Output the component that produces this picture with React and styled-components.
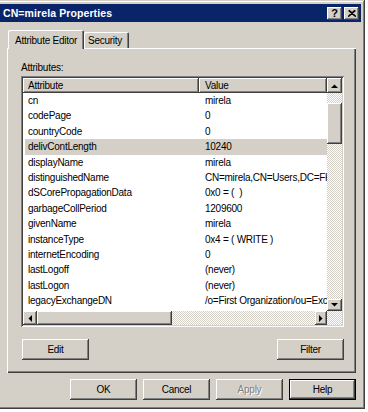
import React from 'react';
import styled, { createGlobalStyle, css } from 'styled-components';

const face = '#d4d0c8';

const GlobalStyle = createGlobalStyle`
  html, body {
    margin: 0;
    padding: 0;
    background: #fff;
  }
  body {
    font-family: "Liberation Sans", Arial, sans-serif;
    font-size: 10px;
    letter-spacing: -0.25px;
    color: #000;
    overflow: hidden;
  }
`;

const raised = css`
  box-shadow: inset -1px -1px #404040, inset 1px 1px #fff,
    inset -2px -2px #808080, inset 2px 2px ${face};
`;

const checker = css`
  background-color: #fff;
  background-image: conic-gradient(${face} 25%, #fff 0 50%, ${face} 0 75%, #fff 0);
  background-size: 2px 2px;
`;

const Window = styled.div`
  margin-left: -4px;
  width: 369px;
  height: 409px;
  box-sizing: border-box;
  padding: 4px;
  background: ${face};
  box-shadow: inset -1px -1px #404040, inset 1px 1px ${face},
    inset -2px -2px #808080, inset 2px 2px #fff;
  display: flex;
  flex-direction: column;
`;

const TitleBar = styled.div`
  height: 18px;
  background: #0a246a;
  color: #fff;
  display: flex;
  align-items: center;
  padding: 0 2px 0 3px;
`;

const TitleText = styled.div`
  flex: 1;
  font-weight: bold;
  font-size: 10.5px;
  letter-spacing: 0.1px;
`;

const CaptionButton = styled.div`
  width: 15px;
  height: 13px;
  margin-left: ${(p) => p.$gap}px;
  background: ${face};
  ${raised};
  display: flex;
  align-items: center;
  justify-content: center;
  color: #000;
  font-weight: bold;
  font-size: 11px;
  line-height: 13px;
`;

const TabStrip = styled.div`
  margin: 8px 0 0 8px;
  height: 18px;
  display: flex;
  align-items: flex-end;
`;

const Tab = styled.div`
  position: relative;
  z-index: ${(p) => (p.$active ? 1 : 0)};
  width: ${(p) => p.$width}px;
  height: ${(p) => (p.$active ? 19 : 16)}px;
  margin-bottom: ${(p) => (p.$active ? -1 : 0)}px;
  box-sizing: border-box;
  padding-left: ${(p) => p.$pad}px;
  background: ${face};
  border-radius: 2px 2px 0 0;
  box-shadow: inset 1px 1px #fff, inset -1px 0 #404040, inset -2px 0 #808080;
  line-height: ${(p) => (p.$active ? 21 : 18)}px;
  white-space: nowrap;
`;

const Panel = styled.div`
  margin: 0 5px 0 7px;
  height: 325px;
  box-sizing: border-box;
  padding: 13px 0 0 14px;
  background: ${face};
  box-shadow: inset 1px 1px #fff, inset -1px -1px #404040, inset -2px -2px #808080;
  display: flex;
  flex-direction: column;
`;

const Label = styled.div`
  line-height: 13px;
`;

const ListBox = styled.div`
  margin-top: 2px;
  width: 323px;
  height: 251px;
  box-sizing: border-box;
  padding: 2px;
  background: #fff;
  box-shadow: inset 1px 1px #808080, inset -1px -1px #fff,
    inset 2px 2px #404040, inset -2px -2px ${face};
  display: grid;
  grid-template-columns: 304px 15px;
  grid-template-rows: 233px 14px;
`;

const ListContent = styled.div`
  overflow: hidden;
  display: flex;
  flex-direction: column;
`;

const HeaderRow = styled.div`
  display: grid;
  grid-template-columns: 176px 1fr;
  height: 15px;
  flex-shrink: 0;
`;

const HeaderCell = styled.div`
  background: ${face};
  ${raised};
  padding-left: ${(p) => p.$pad}px;
  line-height: 15px;
`;

const Rows = styled.div`
  flex: 1;
  overflow: hidden;
`;

const Row = styled.div`
  display: grid;
  grid-template-columns: 174px 1fr;
  margin-left: 2px;
  height: 15.4px;
  line-height: 15.4px;
  background: ${(p) => (p.$selected ? face : 'transparent')};
  white-space: pre;
`;

const Cell = styled.div`
  padding-left: ${(p) => p.$pad}px;
  overflow: hidden;
`;

const VScroll = styled.div`
  display: flex;
  flex-direction: column;
`;

const HScroll = styled.div`
  display: flex;
`;

const ArrowButton = styled.div`
  flex: 0 0 auto;
  width: ${(p) => p.$w};
  height: ${(p) => p.$h};
  background: ${face};
  ${raised};
  display: flex;
  align-items: center;
  justify-content: center;
`;

const Track = styled.div`
  flex: ${(p) => (p.$size ? `0 0 ${p.$size}px` : '1')};
  ${checker};
`;

const Thumb = styled.div`
  flex: 0 0 ${(p) => p.$size}px;
  background: ${face};
  ${raised};
`;

const Corner = styled.div`
  ${checker};
`;

const ButtonRow = styled.div`
  margin-top: 12px;
  width: 322px;
  padding-left: 1px;
  display: flex;
  justify-content: space-between;
`;

const Button = styled.div`
  width: 67px;
  height: 21px;
  box-sizing: border-box;
  background: ${face};
  display: flex;
  align-items: center;
  justify-content: center;
  color: ${(p) => (p.$disabled ? '#808080' : '#000')};
  text-shadow: ${(p) => (p.$disabled ? '1px 1px #fff' : 'none')};
  ${(p) =>
    p.$default
      ? css`
          box-shadow: inset 0 0 0 1px #000, inset -2px -2px #404040,
            inset 2px 2px #fff, inset -3px -3px #808080;
        `
      : raised};
`;

const Footer = styled.div`
  margin-top: 6px;
  padding-right: 5px;
  display: flex;
  justify-content: flex-end;
  gap: 6px;
`;

const Arrow = ({ dir }) => {
  const pts = {
    up: '0,4 3.5,0.5 7,4',
    down: '0,0 3.5,3.5 7,0',
    left: '4,0 0.5,3.5 4,7',
    right: '0,0 3.5,3.5 0,7',
  }[dir];
  const vertical = dir === 'up' || dir === 'down';
  return (
    <svg width={vertical ? 7 : 4} height={vertical ? 4 : 7} viewBox={vertical ? '0 0 7 4' : '0 0 4 7'}>
      <polygon points={pts} fill="#000" />
    </svg>
  );
};

const CloseGlyph = () => (
  <svg width="8" height="7" viewBox="0 0 8 7">
    <path d="M0.5 0.5 L7.5 6.5 M7.5 0.5 L0.5 6.5 M1.5 0.5 L8 6.5 M6.5 0.5 L0 6.5" stroke="#000" strokeWidth="1.1" fill="none" />
  </svg>
);

const attributes = [
  ['cn', 'mirela'],
  ['codePage', '0'],
  ['countryCode', '0'],
  ['delivContLength', '10240'],
  ['displayName', 'mirela'],
  ['distinguishedName', 'CN=mirela,CN=Users,DC=FKD,DC=local'],
  ['dSCorePropagationData', '0x0 = (  )'],
  ['garbageCollPeriod', '1209600'],
  ['givenName', 'mirela'],
  ['instanceType', '0x4 = ( WRITE )'],
  ['internetEncoding', '0'],
  ['lastLogoff', '(never)'],
  ['lastLogon', '(never)'],
  ['legacyExchangeDN', '/o=First Organization/ou=Exchange Administrative Group'],
  ['logonCount', '0'],
];

export default function App() {
  return (
    <>
      <GlobalStyle />
      <Window>
        <TitleBar>
          <TitleText>CN=mirela Properties</TitleText>
          <CaptionButton $gap={0}>?</CaptionButton>
          <CaptionButton $gap={2}>
            <CloseGlyph />
          </CaptionButton>
        </TitleBar>

        <TabStrip>
          <Tab $active $width={76} $pad={7}>Attribute Editor</Tab>
          <Tab $width={45} $pad={4}>Security</Tab>
        </TabStrip>

        <Panel>
          <Label>Attributes:</Label>
          <ListBox>
            <ListContent>
              <HeaderRow>
                <HeaderCell $pad={5}>Attribute</HeaderCell>
                <HeaderCell $pad={6}>Value</HeaderCell>
              </HeaderRow>
              <Rows>
                {attributes.map(([name, value]) => (
                  <Row key={name} $selected={name === 'delivContLength'}>
                    <Cell $pad={3}>{name}</Cell>
                    <Cell $pad={6}>{value}</Cell>
                  </Row>
                ))}
              </Rows>
            </ListContent>
            <VScroll>
              <ArrowButton $w="15px" $h="15px"><Arrow dir="up" /></ArrowButton>
              <Track $size={10} />
              <Thumb $size={41} />
              <Track />
              <ArrowButton $w="15px" $h="12px"><Arrow dir="down" /></ArrowButton>
            </VScroll>
            <HScroll>
              <ArrowButton $w="14px" $h="14px"><Arrow dir="left" /></ArrowButton>
              <Thumb $size={135} />
              <Track />
              <ArrowButton $w="12px" $h="14px"><Arrow dir="right" /></ArrowButton>
            </HScroll>
            <Corner />
          </ListBox>
          <ButtonRow>
            <Button>Edit</Button>
            <Button>Filter</Button>
          </ButtonRow>
        </Panel>

        <Footer>
          <Button>OK</Button>
          <Button>Cancel</Button>
          <Button $disabled>Apply</Button>
          <Button $default>Help</Button>
        </Footer>
      </Window>
    </>
  );
}
